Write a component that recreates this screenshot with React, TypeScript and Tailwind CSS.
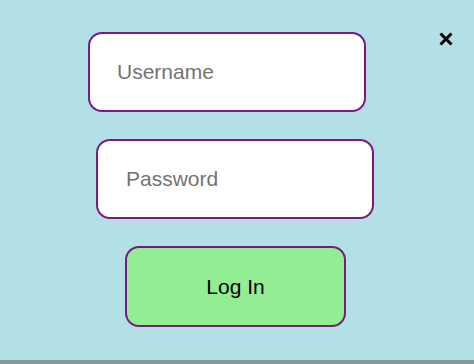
import { useState } from "react";

export default function App() {
  const [username, setUsername] = useState("");
  const [password, setPassword] = useState("");

  return (
    <div className="w-[474px] h-[364px] flex flex-col font-['Liberation_Sans',Arial,sans-serif]">
      <div className="relative flex-1 bg-[#b3e0e6] flex flex-col items-start pt-[32px] gap-[27px]">
        {/* close */}
        <button className="absolute top-[29px] left-[436px] w-[20px] h-[20px] flex items-center justify-center text-black">
          <svg width="16" height="16" viewBox="0 0 16 16">
            <path d="M2.5 2.5 L13.5 13.5 M13.5 2.5 L2.5 13.5" stroke="black" strokeWidth="3" strokeLinecap="butt" />
          </svg>
        </button>

        <input
          value={username}
          onChange={(e) => setUsername(e.target.value)}
          placeholder="Username"
          className="ml-[88px] w-[278px] h-[80px] bg-white border-2 border-[#7a1a7e] rounded-[14px] pl-[27px] text-[21px] text-black placeholder:text-[#737373] outline-none"
        />
        <input
          type="password"
          value={password}
          onChange={(e) => setPassword(e.target.value)}
          placeholder="Password"
          className="ml-[96px] w-[278px] h-[80px] bg-white border-2 border-[#7a1a7e] rounded-[14px] pl-[28px] text-[21px] text-black placeholder:text-[#737373] outline-none"
        />
        <button className="ml-[125px] w-[221px] h-[81px] bg-[#93ee93] border-2 border-[#7a1a7e] rounded-[14px] text-[21px] text-black">
          Log In
        </button>
      </div>
      <div className="h-[4px] bg-[#87999b]" />
    </div>
  );
}
